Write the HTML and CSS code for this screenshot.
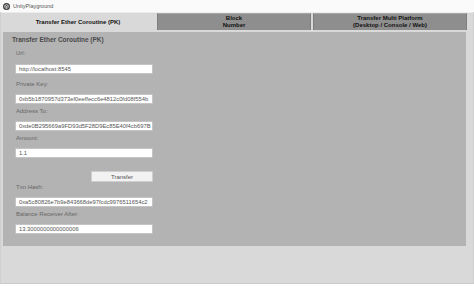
FILE: index.html
```html
<!DOCTYPE html>
<html lang="en">
<head>
  <meta charset="UTF-8">
  <title>UnityPlayground</title>
  <link rel="stylesheet" href="styles.css">
</head>
<body>

  <div class="titlebar">
    <svg class="app-icon" width="7" height="7" viewBox="0 0 14 14">
      <circle cx="7" cy="7" r="7" fill="#3d3d3d"/>
      <path d="M7 3 L10.5 5 L10.5 9 L7 11 L3.5 9 L3.5 5 Z M7 7 L7 11 M7 7 L10.5 5 M7 7 L3.5 5" fill="none" stroke="#fff" stroke-width="1.2"/>
    </svg>
    <span>UnityPlayground</span>
  </div>

  <div class="window">
    <div class="tabs">
      <div class="tab active">Transfer Ether Coroutine (PK)</div>
      <div class="tab">Block<br>Number</div>
      <div class="tab">Transfer Multi Platform<br>(Desktop / Console / Web)</div>
    </div>

    <div class="panel">
      <h3>Transfer Ether Coroutine (PK)</h3>

      <div class="field first">
        <label>Url:</label>
        <div class="input">http://localhost:8545</div>
      </div>
      <div class="field">
        <label>Private Key:</label>
        <div class="input">0xb5b1870957d373ef0eeffecc6e4812c0fd08f554b</div>
      </div>
      <div class="field">
        <label>Address To:</label>
        <div class="input">0xde0B295669a9FD93d5F28D9Ec85E40f4cb697B</div>
      </div>
      <div class="field">
        <label>Amount:</label>
        <div class="input">1.1</div>
      </div>

      <button class="transfer">Transfer</button>

      <div class="field">
        <label>Txn Hash:</label>
        <div class="input">0xa5c80826e7b9e843668de97fcdc9976511654c2</div>
      </div>
      <div class="field">
        <label>Balance Receiver After:</label>
        <div class="input">13.3000000000000006</div>
      </div>
    </div>
  </div>

</body>
</html>
```

FILE: styles.css
```css
html, body {
  margin: 0;
  padding: 0;
}

body {
  width: 474px;
  height: 286px;
  overflow: hidden;
  background: #ffffff;
  font-family: 'Liberation Sans', Arial, sans-serif;
  color: #444;
  -webkit-font-smoothing: antialiased;
}

.titlebar {
  height: 12px;
  display: flex;
  align-items: center;
  gap: 3px;
  padding-left: 3px;
  background: #fafafa;
  font-size: 5.5px;
  color: #555;
}

.app-icon {
  display: block;
}

.window {
  height: 271px;
  background: #d9d9d9;
  border-left: 1px solid #cfcfcf;
  border-bottom: 1px solid #c9c9c9;
  border-right: 1px solid #cfcfcf;
}

.tabs {
  display: flex;
  gap: 2px;
  height: 17px;
  padding-right: 6px;
  border-top: 1px solid #ececec;
}

.tab {
  flex: 1;
  display: flex;
  align-items: center;
  justify-content: center;
  text-align: center;
  font-size: 6px;
  line-height: 7px;
  font-weight: bold;
  color: #111;
  background: #8e8e8e;
  border-top: 1px solid #a9a9a9;
  border-left: 1px solid #7e7e7e;
  border-right: 1px solid #7e7e7e;
}

.tab.active {
  background: #d9d9d9;
  border-color: #d9d9d9;
}

.panel {
  margin: 2px 7px 0 2px;
  height: 211px;
  padding: 3px 0 0 12px;
  background: #b3b3b3;
}

.panel h3 {
  margin: 0 0 0 -3px;
  font-size: 6.5px;
  line-height: 9px;
  color: #4a4a4a;
}

.field {
  width: 138px;
}

.field label {
  display: block;
  padding-left: 1px;
  font-size: 6px;
  line-height: 8px;
  color: #666;
  margin-bottom: 6px;
}

.input {
  height: 10px;
  box-sizing: border-box;
  padding: 0 3px;
  background: #fff;
  border: 1px solid #c4c4c4;
  border-radius: 1px;
  font-size: 5.8px;
  line-height: 8px;
  color: #555;
  white-space: nowrap;
  overflow: hidden;
  margin-bottom: 3px;
}

.field.first {
  margin-top: 5px;
}

.field.first label {
  margin-bottom: 7px;
}

.field.first .input {
  margin-bottom: 6px;
}

.transfer {
  display: block;
  margin: 13px 0 1px 76px;
  width: 62px;
  height: 11px;
  padding: 0;
  background: #f2f2f2;
  border: 1px solid #cfcfcf;
  border-radius: 1px;
  font-family: inherit;
  font-size: 6px;
  color: #555;
}
```
